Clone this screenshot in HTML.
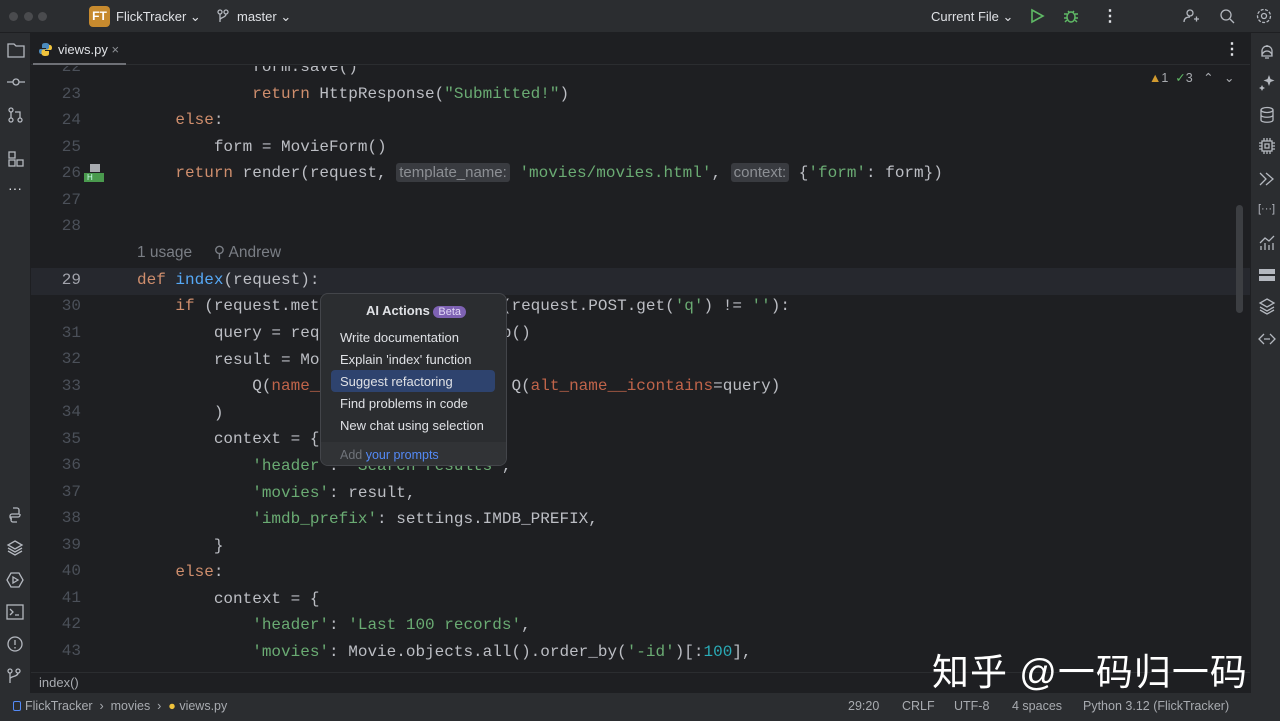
<!DOCTYPE html>
<html><head><meta charset="utf-8"><style>
*{margin:0;padding:0;box-sizing:border-box}
body{width:1280px;height:721px;overflow:hidden;background:#1e1f22;font-family:"Liberation Sans",sans-serif;position:relative;color:#dfe1e5}
.abs{position:absolute}
.title{left:0;top:0;width:1280px;height:33px;background:#2b2d30;border-bottom:1px solid #1e1f22}
.t{font-size:13px;color:#dfe1e5;white-space:nowrap}
.side{top:33px;height:660px;width:31px;background:#2b2d30;border-right:1px solid #1e1f22}
.tabbar{left:31px;top:33px;width:1219px;height:32px;background:#1e1f22;border-bottom:1px solid #2b2d30}
.code{font-family:"Liberation Mono",monospace;font-size:16px;color:#bcbec4;white-space:pre;line-height:26.6px}
.ln{position:absolute;width:50px;text-align:right;left:0;font-family:"Liberation Mono",monospace;font-size:16px;color:#4b5059;line-height:26.6px}
.k{color:#cf8e6d}.s{color:#6aab73}.f{color:#56a8f5}.p{color:#c0644a}.n{color:#2aacb8}
.hint{background:#393b40;color:#8c8f94;font-family:"Liberation Sans",sans-serif;font-size:15px;border-radius:3px;padding:1px 3px}
.ic{stroke:#b4b8bf;fill:none;stroke-width:1.3}
.pop{left:320px;top:293px;width:187px;height:173px;background:#2b2d30;border:1px solid #43454a;border-radius:8px;overflow:hidden}
.pi{position:absolute;left:19px;font-size:13px;color:#dfe1e5}
.status{left:0;top:693px;width:1280px;height:28px;background:#2b2d30}
.st{font-size:12.5px;color:#a8abb0;top:699px;position:absolute;white-space:nowrap}
</style></head><body>
<div class="abs title"></div>
<div class="abs" style="left:9px;top:12px;width:9px;height:9px;border-radius:50%;background:#4a4b4e"></div>
<div class="abs" style="left:24px;top:12px;width:9px;height:9px;border-radius:50%;background:#4a4b4e"></div>
<div class="abs" style="left:38px;top:12px;width:9px;height:9px;border-radius:50%;background:#4a4b4e"></div>
<div class="abs" style="left:89px;top:6px;width:21px;height:21px;border-radius:4px;background:#c78a2e;color:#fff;font-size:12px;font-weight:bold;text-align:center;line-height:21px">FT</div>
<div class="abs t" style="left:116px;top:9px">FlickTracker ⌄</div>
<svg class="abs" style="left:216px;top:9px" width="14" height="14"><circle cx="4" cy="3" r="2" class="ic"/><circle cx="10" cy="3" r="2" class="ic"/><path d="M4 5v8M10 5c0 4-6 3-6 6" class="ic"/></svg>
<div class="abs t" style="left:237px;top:9px">master ⌄</div>
<div class="abs t" style="left:931px;top:9px">Current File ⌄</div>
<svg class="abs" style="left:1029px;top:8px" width="16" height="16"><path d="M3 2l11 6-11 6z" stroke="#5fb865" fill="none" stroke-width="1.6"/></svg>
<svg class="abs" style="left:1062px;top:7px" width="18" height="18"><ellipse cx="9" cy="10" rx="4" ry="5" stroke="#5fb865" fill="none" stroke-width="1.5"/><path d="M2 7h3M13 7h3M2 11h3M13 11h3M3 15l2-2M15 15l-2-2M6 4l1 1M12 4l-1 1" stroke="#5fb865" stroke-width="1.5"/></svg>
<div class="abs t" style="left:1102px;top:6px;font-size:16px;font-weight:bold">⋮</div>
<svg class="abs" style="left:1182px;top:7px" width="18" height="18"><circle cx="8" cy="6" r="3" class="ic"/><path d="M2 15c0-4 3-5 6-5M12 12h5M14.5 9.5v5" class="ic"/></svg>
<svg class="abs" style="left:1219px;top:8px" width="16" height="16"><circle cx="7" cy="7" r="5" class="ic"/><path d="M11 11l4 4" class="ic"/></svg>
<svg class="abs" style="left:1255px;top:7px" width="18" height="18"><circle cx="9" cy="9" r="2.5" class="ic"/><circle cx="9" cy="9" r="6.5" class="ic" stroke-dasharray="3 1.5"/></svg>

<div class="abs side" style="left:0"></div>
<div class="abs side" style="left:1250px;border-right:0;border-left:1px solid #1e1f22"></div>
<svg class="abs" style="left:7px;top:42px" width="18" height="16"><path d="M1 2h6l2 2h8v11H1z" class="ic"/></svg>
<svg class="abs" style="left:7px;top:74px" width="18" height="16"><circle cx="9" cy="8" r="3" class="ic"/><path d="M0 8h6M12 8h6" class="ic"/></svg>
<svg class="abs" style="left:7px;top:106px" width="18" height="18"><circle cx="4" cy="4" r="2" class="ic"/><circle cx="4" cy="14" r="2" class="ic"/><circle cx="13" cy="14" r="2" class="ic"/><path d="M4 6v6M13 12V6H8" class="ic"/></svg>
<svg class="abs" style="left:7px;top:150px" width="18" height="18"><rect x="2" y="2" width="6" height="6" class="ic"/><rect x="2" y="10" width="6" height="6" class="ic"/><rect x="10" y="10" width="6" height="6" class="ic"/></svg>
<div class="abs t" style="left:8px;top:180px;font-size:14px">···</div>
<svg class="abs" style="left:6px;top:506px" width="18" height="18"><path d="M7 2h4a2 2 0 012 2v4H6a2 2 0 00-2 2v1a2 2 0 002 2M11 16H7a2 2 0 01-2-2v-3h7a2 2 0 002-2V8" class="ic"/></svg>
<svg class="abs" style="left:6px;top:539px" width="18" height="18"><path d="M9 2l7 4-7 4-7-4zM2 9l7 4 7-4M2 12l7 4 7-4" class="ic"/></svg>
<svg class="abs" style="left:6px;top:571px" width="18" height="18"><path d="M5 2h8l4 7-4 7H5L1 9z" class="ic"/><path d="M7 6l5 3-5 3z" class="ic"/></svg>
<svg class="abs" style="left:6px;top:603px" width="18" height="18"><rect x="1" y="2" width="16" height="14" class="ic"/><path d="M4 6l3 3-3 3M9 12h4" class="ic"/></svg>
<svg class="abs" style="left:6px;top:635px" width="18" height="18"><circle cx="9" cy="9" r="7" class="ic"/><path d="M9 5v5M9 12v1.5" class="ic"/></svg>
<svg class="abs" style="left:6px;top:667px" width="18" height="18"><circle cx="4" cy="4" r="2" class="ic"/><circle cx="12" cy="4" r="2" class="ic"/><path d="M4 6v10M12 6c0 4-8 3-8 6" class="ic"/></svg>
<svg class="abs" style="left:1258px;top:42px" width="18" height="18"><path d="M4 14a5 5 0 0110 0zM9 3v2M4 14V9a5 5 0 0110 0v5M7 16h4" class="ic"/></svg>
<svg class="abs" style="left:1258px;top:73px" width="18" height="18"><path d="M11 2l1.5 4 4 1.5-4 1.5L11 13 9.5 9 5.5 7.5l4-1.5zM4 12l1 2 2 1-2 1-1 2-1-2-2-1 2-1z" fill="#b4b8bf"/></svg>
<svg class="abs" style="left:1258px;top:106px" width="18" height="18"><ellipse cx="9" cy="4" rx="6" ry="2.5" class="ic"/><path d="M3 4v10c0 3 12 3 12 0V4M3 9c0 3 12 3 12 0" class="ic"/></svg>
<svg class="abs" style="left:1258px;top:137px" width="18" height="18"><rect x="4" y="4" width="10" height="10" class="ic"/><rect x="7" y="7" width="4" height="4" class="ic"/><path d="M6 1v3M9 1v3M12 1v3M6 14v3M9 14v3M12 14v3M1 6h3M1 9h3M1 12h3M14 6h3M14 9h3M14 12h3" class="ic"/></svg>
<svg class="abs" style="left:1258px;top:170px" width="18" height="18"><path d="M2 3l6 6-6 6M8 3l7 6-7 6" class="ic" stroke-width="2"/></svg>
<div class="abs t" style="left:1258px;top:203px;font-size:11px;color:#b4b8bf">[···]</div>
<svg class="abs" style="left:1258px;top:234px" width="18" height="18"><path d="M3 16v-4M7 16V9M11 16v-5M15 16v-7M2 9l5-5 4 3 5-5" class="ic"/></svg>
<svg class="abs" style="left:1258px;top:266px" width="18" height="18"><rect x="1" y="3" width="16" height="5" fill="#b4b8bf"/><rect x="1" y="10" width="16" height="5" fill="#b4b8bf"/></svg>
<svg class="abs" style="left:1258px;top:298px" width="18" height="18"><path d="M9 1l7 4-7 4-7-4zM2 9l7 4 7-4M2 12l7 4 7-4" class="ic"/></svg>
<svg class="abs" style="left:1258px;top:330px" width="18" height="18"><path d="M6 4L1 9l5 5M12 4l5 5-5 5M6 9h6" class="ic" stroke-width="2"/></svg>

<div class="abs tabbar"></div>
<svg class="abs" style="left:38px;top:42px" width="15" height="15"><path d="M7.5 1C4 1 4 2.5 4 4v2h4v1H2.5C1 7 1 9 1 9.5 1 11 2 12 3 12h1v-2c0-1.5 1-2.5 2.5-2.5h3c1 0 2-1 2-2V3.5C11.5 2 10 1 7.5 1z" fill="#4b8bbe"/><path d="M7.5 14c3.5 0 3.5-1.5 3.5-3V9H7V8h5.5C14 8 14 6 14 5.5 14 4 13 3 12 3h-1v2c0 1.5-1 2.5-2.5 2.5h-3c-1 0-2 1-2 2v2c0 1.5 1.5 2.5 4 2.5z" fill="#f0c33c"/></svg>
<div class="abs t" style="left:58px;top:42px">views.py <span style="color:#8c8f94">×</span></div>
<div class="abs" style="left:33px;top:63px;width:93px;height:2px;background:#6e7076"></div>
<div class="abs t" style="left:1224px;top:39px;font-size:16px;font-weight:bold">⋮</div>

<div class="abs" style="left:31px;top:66px;width:1219px;height:606px;overflow:hidden">
<div class="abs" style="left:0;top:202px;width:1219px;height:27px;background:#26282e"></div>
<div class="abs" style="left:1205px;top:139px;width:7px;height:108px;border-radius:4px;background:#3c3e42"></div>
<div class="abs" style="left:1118px;top:4px;font-size:12.5px;color:#a8abb0;white-space:nowrap"><span style="color:#d19a2f">▲</span>1 &nbsp;<span style="color:#5fb865">✓</span>3 &nbsp; ⌃ &nbsp; ⌄</div>
<div class="abs" style="left:53px;top:98px;width:20px;height:18px"><div style="position:absolute;left:6px;top:0;width:10px;height:8px;background:#a8abb0"></div><div style="position:absolute;left:0;top:9px;width:20px;height:9px;background:#4a9a4e;color:#cfe;font-size:8px;line-height:9px;padding-left:3px">H</div></div>
</div>
<div class="abs" style="left:31px;top:66px;width:1200px;height:606px;overflow:hidden">
<div class="ln" style="top:-12px">22</div>
<div class="ln" style="top:14.5px">23</div>
<div class="ln" style="top:41px">24</div>
<div class="ln" style="top:67.5px">25</div>
<div class="ln" style="top:94px">26</div>
<div class="ln" style="top:120.5px">27</div>
<div class="ln" style="top:147px">28</div>
<div class="ln" style="top:200.5px;color:#a1a3ab">29</div>
<div class="ln" style="top:227px">30</div>
<div class="ln" style="top:253.5px">31</div>
<div class="ln" style="top:280px">32</div>
<div class="ln" style="top:306.5px">33</div>
<div class="ln" style="top:333px">34</div>
<div class="ln" style="top:359.5px">35</div>
<div class="ln" style="top:386px">36</div>
<div class="ln" style="top:412.5px">37</div>
<div class="ln" style="top:439px">38</div>
<div class="ln" style="top:465.5px">39</div>
<div class="ln" style="top:492px">40</div>
<div class="ln" style="top:518.5px">41</div>
<div class="ln" style="top:545px">42</div>
<div class="ln" style="top:571.5px">43</div>
<div class="abs code" style="left:106px;top:-12px">            form.save()
            <span class="k">return</span> HttpResponse(<span class="s">"Submitted!"</span>)
    <span class="k">else</span>:
        form = MovieForm()
    <span class="k">return</span> render(request, <span class="hint">template_name:</span> <span class="s">'movies/movies.html'</span>, <span class="hint">context:</span> {<span class="s">'form'</span>: form})


<span style="font-family:'Liberation Sans',sans-serif;font-size:15.5px;color:#7a7e85">1 usage &nbsp;&nbsp;&nbsp; ⚲ Andrew</span>
<span class="k">def</span> <span class="f">index</span>(request):
    <span class="k">if</span> (request.method == <span class="s">'POST'</span>) <span class="k">and</span> (request.POST.get(<span class="s">'q'</span>) != <span class="s">''</span>):
        query = request.POST[<span class="s">'q'</span>].strip()
        result = Movie.objects.filter(
            Q(<span class="p">name__icontains</span>=query) | Q(<span class="p">alt_name__icontains</span>=query)
        )
        context = {
            <span class="s">'header'</span>: <span class="s">'Search results'</span>,
            <span class="s">'movies'</span>: result,
            <span class="s">'imdb_prefix'</span>: settings.IMDB_PREFIX,
        }
    <span class="k">else</span>:
        context = {
            <span class="s">'header'</span>: <span class="s">'Last 100 records'</span>,
            <span class="s">'movies'</span>: Movie.objects.all().order_by(<span class="s">'-id'</span>)[:<span class="n">100</span>],
</div>
</div>

<div class="abs pop">
<div class="abs" style="left:0;top:148px;width:187px;height:25px;background:#313336"></div>
<div class="abs" style="left:45px;top:9px;font-size:13px;font-weight:bold;color:#dfe1e5">AI Actions <span style="font-weight:normal;font-size:11px;background:#7e62b3;color:#e0d6f5;border-radius:8px;padding:0 5px">Beta</span></div>
<div class="abs" style="left:10px;top:76px;width:164px;height:22px;background:#2e436e;border-radius:4px"></div>
<div class="pi" style="top:36px">Write documentation</div>
<div class="pi" style="top:58px">Explain 'index' function</div>
<div class="pi" style="top:80px">Suggest refactoring</div>
<div class="pi" style="top:102px">Find problems in code</div>
<div class="pi" style="top:124px">New chat using selection</div>
<div class="pi" style="top:154px;font-size:12.5px;color:#6f737a">Add <span style="color:#548af7">your prompts</span></div>
</div>

<div class="abs" style="left:31px;top:672px;width:1219px;height:21px;background:#1e1f22;border-top:1px solid #2b2d30"></div>
<div class="abs t" style="left:39px;top:675px;color:#a8abb0">index()</div>

<div class="abs status"></div>
<div class="abs" style="left:13px;top:701px;width:8px;height:10px;border:1.5px solid #548af7;border-radius:2px"></div>
<div class="st" style="left:25px">FlickTracker &nbsp;›&nbsp; movies &nbsp;›&nbsp; <span style="color:#f0c33c">●</span> views.py</div>
<div class="st" style="left:848px">29:20</div>
<div class="st" style="left:902px">CRLF</div>
<div class="st" style="left:954px">UTF-8</div>
<div class="st" style="left:1012px">4 spaces</div>
<div class="st" style="left:1083px">Python 3.12 (FlickTracker)</div>

<div class="abs" style="left:932px;top:642px;font-family:'Liberation Sans','Noto Sans CJK SC',sans-serif;font-size:37px;color:#fff;white-space:nowrap;letter-spacing:1px">知乎 @一码归一码</div>
</body></html>
